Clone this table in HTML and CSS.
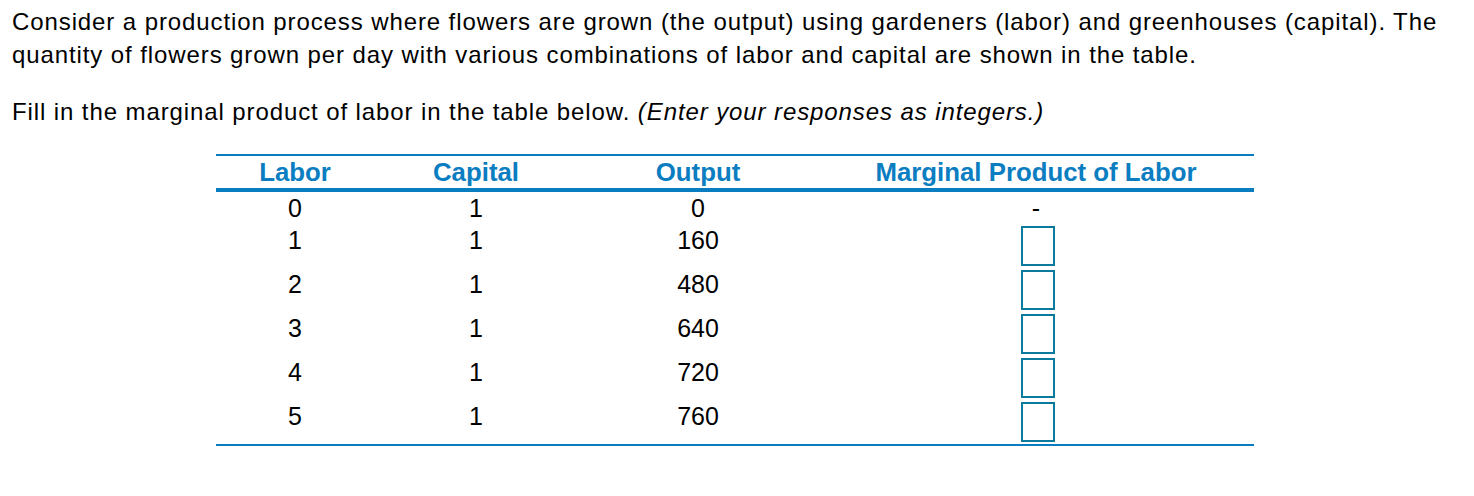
FILE: index.html
```html
<!DOCTYPE html>
<html>
<head>
<meta charset="utf-8">
<link rel="stylesheet" href="styles.css">
</head>
<body>
<div class="page">
  <p class="intro">Consider a production process where flowers are grown (the output) using gardeners (labor) and greenhouses (capital). The quantity of flowers grown per day with various combinations of labor and capital are shown in the table.</p>
  <p class="instr">Fill in the marginal product of labor in the table below. <em>(Enter your responses as integers.)</em></p>
  <table class="data">
    <colgroup>
      <col class="c1"><col class="c2"><col class="c3"><col class="c4">
    </colgroup>
    <thead>
      <tr><th>Labor</th><th>Capital</th><th>Output</th><th>Marginal Product of Labor</th></tr>
    </thead>
    <tbody>
      <tr class="first"><td>0</td><td>1</td><td>0</td><td>-</td></tr>
      <tr><td>1</td><td>1</td><td>160</td><td><span class="box"></span></td></tr>
      <tr><td>2</td><td>1</td><td>480</td><td><span class="box"></span></td></tr>
      <tr><td>3</td><td>1</td><td>640</td><td><span class="box"></span></td></tr>
      <tr><td>4</td><td>1</td><td>720</td><td><span class="box"></span></td></tr>
      <tr><td>5</td><td>1</td><td>760</td><td><span class="box"></span></td></tr>
    </tbody>
  </table>
</div>
</body>
</html>
```

FILE: styles.css
```css
html, body {
  margin: 0;
  padding: 0;
  background: #ffffff;
}
.page {
  padding: 5px 12px 0 12px;
  font-family: "Liberation Sans", Arial, sans-serif;
  color: #000000;
  font-size: 24px;
  line-height: 33px;
}
.intro,
.instr {
  letter-spacing: 0.9px;
}
.intro {
  margin: 0;
}
.instr {
  margin: 24px 0 0 0;
}
.data {
  margin: 26px 0 0 204px;
  width: 1038px;
  border-collapse: collapse;
  table-layout: fixed;
  font-size: 25px;
}
.c1 { width: 158px; }
.c2 { width: 204px; }
.c3 { width: 240px; }
.c4 { width: 436px; }
.data th {
  color: #0b7dc1;
  font-weight: bold;
  font-size: 25.8px;
  line-height: 29px;
  height: 32px;
  padding: 0;
  text-align: center;
  vertical-align: middle;
}
.data thead tr {
  border-top: 2px solid #0a7dc0;
  border-bottom: 4px solid #0a7dc0;
}
.data td {
  text-align: center;
  vertical-align: top;
  padding: 2px 0 0 0;
  height: 42px;
  line-height: 29px;
}
.data tr.first td {
  height: 30px;
}
.data tbody tr:last-child {
  border-bottom: 2px solid #0a7dc0;
}
.box {
  display: inline-block;
  box-sizing: border-box;
  width: 34px;
  height: 40px;
  border: 2px solid #0b7a9c;
  vertical-align: top;
  margin-left: 4px;
}
```
